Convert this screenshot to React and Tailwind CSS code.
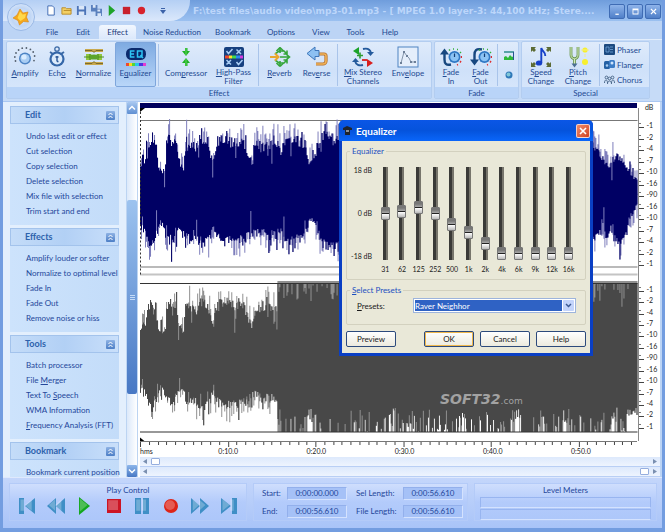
import React from "react";

/* ---------- waveform data ---------- */

// [x, amplitude] control points, in pixels of a 496 wide channel
const UP = [
  [0, 32], [5, 38], [7, 58], [16, 58], [18, 30], [22, 26], [25, 30], [26, 60], [36, 57], [38, 38], [43, 28],
  [45, 60], [52, 53], [57, 52], [60, 63], [67, 57], [70, 44], [73, 38], [76, 58], [82, 60], [95, 56], [100, 62],
  [103, 56], [108, 42], [112, 34], [115, 57], [122, 53], [128, 55], [135, 60], [140, 46], [143, 61], [155, 59],
  [165, 55], [168, 34], [173, 40], [177, 55], [182, 63], [198, 60], [454, 52], [462, 36], [467, 30], [470, 36],
  [475, 43], [481, 36], [485, 30], [490, 20], [496, 16],
];
const DOWN = [
  [0, 36], [5, 42], [8, 56], [13, 56], [17, 42], [20, 32], [23, 38], [27, 50], [33, 52], [38, 38], [43, 40],
  [47, 50], [55, 50], [62, 54], [68, 52], [73, 38], [78, 50], [83, 54], [95, 50], [102, 52], [110, 44], [117, 42],
  [128, 46], [140, 43], [145, 50], [155, 52], [163, 46], [167, 28], [172, 28], [177, 46], [182, 56], [198, 59],
  [454, 48], [460, 44], [465, 46], [470, 34], [475, 52], [481, 49], [487, 28], [496, 10],
];

function seeded(seed) {
  let s = seed;
  return () => {
    s = (s * 1664525 + 1013904223) % 4294967296;
    return s / 4294967296;
  };
}

function at(points, x) {
  for (let i = 1; i < points.length; i++) {
    if (x <= points[i][0]) {
      const [x0, y0] = points[i - 1];
      const [x1, y1] = points[i];
      return y0 + ((y1 - y0) * (x - x0)) / (x1 - x0);
    }
  }
  return points[points.length - 1][1];
}

const CLUSTERS = [137, 169, 251, 268, 321, 374, 400, 424, 472];

function build(seed, center, loud) {
  const rnd = seeded(seed);
  let solid = "";
  let faint = "";
  for (let x = 0; x < 496; x++) {
    let up = at(UP, x) * (0.8 + rnd() * 0.2);
    let down = at(DOWN, x) * (0.78 + rnd() * 0.22);
    let upF = up + (rnd() < 0.4 ? 3 + rnd() * 14 : 0);
    let downF = down + (rnd() < 0.4 ? 3 + rnd() * 12 : 0);
    if (rnd() < 0.06) up = upF = up + 6 + rnd() * 10;
    if (rnd() < 0.06) down = downF = down + 6 + rnd() * 12;
    if (rnd() < 0.09) up -= rnd() * 24;
    if (rnd() < 0.09) down -= rnd() * 24;
    if (loud && x > 136) {
      up = 74 - (rnd() < 0.4 ? rnd() * (x > 450 ? 26 : 18) : 0);
      upF = 76;
      const near = CLUSTERS.some((c) => Math.abs(c - x) < 4);
      const r = rnd();
      down = 74.5;
      downF = 74.5;
      if (x > 484) down = downF = 50 + r * 10;
      else if (near) down = 50 + r * 20;
      else if (r < 0.18) down = downF = 56 + rnd() * 18;
      else if (r < 0.36) down = 52 + rnd() * 20;
      if (near && rnd() < 0.5) downF = down;
    }
    solid += `M${x} ${(center - up).toFixed(1)}h1V${(center + down).toFixed(1)}h-1z`;
    faint += `M${x} ${(center - upF).toFixed(1)}h1V${(center + downF).toFixed(1)}h-1z`;
  }
  return { solid, faint };
}

const LEFT = build(11, 86, false);
const RIGHT = build(29, 80, true);

/* ---------- small helpers ---------- */

function Key({ text, k }) {
  if (k === undefined || k < 0) return text;
  return (
    <>
      {text.slice(0, k)}
      <u>{text[k]}</u>
      {text.slice(k + 1)}
    </>
  );
}

function Svg({ size = "size-[22px]", box = "0 0 22 22", children }) {
  return (
    <svg className={`${size} shrink-0`} viewBox={box} fill="none" aria-hidden="true">
      {children}
    </svg>
  );
}

/* ---------- ribbon icons ---------- */

const AmplifyIcon = () => (
  <Svg>
    <circle cx="11" cy="12.500" r="6" fill="#4c83c4" />
    <circle cx="11" cy="12.500" r="4.600" fill="#a9cdf3" />
    <circle cx="10" cy="11" r="2.600" fill="#d9ecff" />
    <g fill="#54606e">
      {[[1.5, 15], [0.8, 11], [2, 7], [4.6, 4], [8.2, 2.2], [12.4, 2], [16.4, 3.4], [19.2, 6], [20.6, 10], [20, 14.6]].map(([x, y]) => (
        <circle key={x} cx={x} cy={y} r="0.9" />
      ))}
    </g>
  </Svg>
);
const EchoIcon = () => (
  <Svg>
    <circle cx="11" cy="3" r="2.200" stroke="#3c6aa6" strokeWidth="1.300" />
    <path d="M4 6l3 2M18 6l-3 2" stroke="#3c6aa6" strokeWidth="2" />
    <circle cx="11" cy="13" r="7.600" fill="#3567a8" />
    <circle cx="11" cy="13" r="5.400" fill="#dcebfb" />
    <path d="M11 10v5.500M9.500 11h3M11 15.500h1.500" stroke="#2a5796" strokeWidth="1.400" />
  </Svg>
);
const NormalizeIcon = () => (
  <Svg>
    <path d="M2 3h18v3H2zM2 16h18v3H2z" fill="#c9a94e" />
    <path d="M2 4.500h7l2 2 2-2h7M2 17.500h7l2-2 2 2h7" stroke="#7d6c2c" strokeWidth="1" />
    <path d="M3 8h4l4 1.500L15 8h4v6h-4l-4-1.500L7 14H3z" fill="#8ec63f" />
    <path d="M1 11h20M7 8v6M15 8v6" stroke="#4c8f22" strokeWidth="1.200" />
    <ellipse cx="11" cy="11" rx="4" ry="2.600" fill="#5ba52c" />
  </Svg>
);
const EqualizerIcon = () => (
  <Svg>
    <rect x="1" y="2" width="20" height="12" rx="5.500" fill="#0b2a6c" />
    <path d="M9.500 5H5.500v6h4M5.500 8h3.500" stroke="#2ec4f4" strokeWidth="1.500" />
    <path d="M12.500 5h4.500v6h-4.500zM15.500 9l2.500 3" stroke="#2ec4f4" strokeWidth="1.500" />
    <path d="M1 17h3v3H1z" fill="#f04a2c" />
    <path d="M4 17h3v3H4z" fill="#ffd91c" />
    <path d="M7 17h3v3H7z" fill="#53d636" />
    <path d="M10 17h4v3h-4z" fill="#27c8e8" />
    <path d="M14 17h4v3h-4z" fill="#4b35e0" />
    <path d="M18 17h3v3h-3z" fill="#e63bd0" />
  </Svg>
);
const CompressorIcon = () => (
  <Svg>
    <path d="M10 2h2.500v3H15l-4 5-4-5h3zM10 20h2.500v-3H15l-4-5-4 5h3z" fill="#1fb225" />
    <path d="M11 2v7M11 20v-7" stroke="#6fe06a" strokeWidth="0.800" />
  </Svg>
);
const HighPassIcon = () => (
  <Svg>
    <rect x="1" y="1" width="20" height="20" rx="2" fill="#17407f" />
    <path d="M3.500 5l2 2.500L9.500 3M13.500 3.500l4.500 4.500M18 3.500L13.500 8M3.500 14l4.500 4.500M8 14l-4.500 4.500M13.500 16l2 2.500 4-4.500" stroke="#a9cdf5" strokeWidth="1.500" />
    <path d="M2 9.500h4v3H2z" fill="#f2482a" />
    <path d="M6 9.500h3v3H6z" fill="#ffe02a" />
    <path d="M9 9.500h4v3H9z" fill="#40da4a" />
    <path d="M13 9.500h4v3h-4z" fill="#2b8cf0" />
    <path d="M17 9.500h3v3h-3z" fill="#d43be0" />
  </Svg>
);
const ReverbIcon = () => (
  <Svg>
    <path d="M11 1.500l-3.500 3.500M11 1.500l3.500 3.500M11 20.500L7.500 17M11 20.500l3.500-3.500M11 2v5M11 20v-5" stroke="#35a53a" strokeWidth="1.600" />
    <path d="M6 8l4-3h5l3 3M6 14l4 3h5l3-3M18 4.500V8h-3.500M18 17.500V14h-3.500M11 11h9M17.500 8.500L20.500 11l-3 2.500" stroke="#35a53a" strokeWidth="1.600" />
    <path d="M1 11h8M6 7.500L9.500 11 6 14.500" stroke="#e8a72e" strokeWidth="2" />
  </Svg>
);
const ReverseIcon = () => (
  <Svg>
    <path d="M11 8h7a2 2 0 012 2v5a3 3 0 01-3 3h-7" stroke="#b8702a" strokeWidth="3.200" />
    <path d="M11 8h7a2 2 0 012 2v5a3 3 0 01-3 3h-7" stroke="#f0b35a" strokeWidth="1.600" />
    <path d="M9 1L1 7.500 9 14v-3.500h4v-6H9z" fill="#8cc0f2" stroke="#3c76ba" strokeWidth="1" />
  </Svg>
);
const MixIcon = () => (
  <Svg>
    <path d="M1 5l6-4v8z" fill="#1ca32a" />
    <path d="M21 17l-6-4v8z" fill="#d81f1f" />
    <path d="M11 3c4-1 7 0 8 4M11 19c-4 1-7 0-8-4" stroke="#245a9c" strokeWidth="1.900" />
    <path d="M15 6h7l-3.500 4zM0 16h7l-3.500-4z" fill="#245a9c" />
    <path d="M5 9.500h6M8 6.500v6" stroke="#2c9c30" strokeWidth="1.600" />
    <path d="M10 14h5" stroke="#d81f1f" strokeWidth="1.800" />
  </Svg>
);
const EnvelopeIcon = () => (
  <Svg>
    <rect x="1" y="1" width="20" height="20" fill="#e4eefb" stroke="#4f83c2" />
    <path d="M4 17l3-11 3 4 2 2 2 4h4" stroke="#8394aa" strokeWidth="1" />
    <path d="M3 16h2v2H3zM6 5h2v2H6zM9 9h2v2H9zM13 15h2v2h-2zM17 15h2v2h-2z" fill="#6c7f98" />
  </Svg>
);
function FadeIcon({ out }) {
  return (
    <Svg>
      {out ? (
        <>
          <path d="M12 3.500C6 2 4.500 5 4.500 9v5" stroke="#17477f" strokeWidth="2.400" />
          <path d="M0 13.500h9l-4.500 6z" fill="#17477f" />
        </>
      ) : (
        <>
          <path d="M11 18.500c-5 1-6.500-1-6.500-5V8" stroke="#17477f" strokeWidth="2.400" />
          <path d="M0 8.500h9l-4.500-6z" fill="#17477f" />
        </>
      )}
      <circle cx="14.500" cy="11" r="6" fill="#2f78c4" />
      <circle cx="14.500" cy="11" r="4.300" fill="#8cc3f4" />
      <path d="M14.500 7.500V11" stroke="#123c74" strokeWidth="1.200" />
      <path d="M9 4.500l1-1M13 3h1M17 3.500h1M20 6l1 1" stroke="#35b03a" strokeWidth="1.400" />
      <path d="M21.500 10v2M21 15l-1 1.500M18 18.500l-1 .5" stroke="#e03030" strokeWidth="1.400" />
    </Svg>
  );
}
const SpeedIcon = () => (
  <Svg>
    <path d="M1 1h5L4.500 2.500 6 4 4 6 2.500 4.500 1 6zM21 1h-5l1.500 1.500L16 4l2 2 1.500-1.500L21 6zM1 21h5l-1.500-1.500L6 18l-2-2-1.500 1.500L1 16zM21 21h-5l1.500-1.500L16 18l2-2 1.500 1.500L21 16z" fill="#5c6b34" />
    <ellipse cx="9" cy="17" rx="3.200" ry="2.600" fill="#1540c8" />
    <path d="M11.300 17V2c1 4 4.500 4 4 8" stroke="#1540c8" strokeWidth="1.900" />
  </Svg>
);
const PitchIcon = () => (
  <Svg>
    <path d="M4 1v8c0 5 7 5 7 0V1M7.500 13v6" stroke="#6d9a52" strokeWidth="2.800" />
    <path d="M4 1v8c0 5 7 5 7 0V1M7.500 13v6" stroke="#d6eac0" strokeWidth="1" />
    <path d="M4.500 17.500h6l-3 4z" fill="#4a6e93" />
    <circle cx="18" cy="4" r="2.600" fill="#f7ef2e" />
    <circle cx="18" cy="16" r="3" fill="#f7ef2e" />
    <path d="M14 4h8M18 8v3" stroke="#f4ee86" strokeWidth="1" />
  </Svg>
);
const PhaserIcon = () => (
  <Svg size="size-[11px]" box="0 0 11 11">
    <rect width="11" height="11" rx="1" fill="#1c4a80" />
    <path d="M2 3h3v5H2zM6 3h3M6 5.500h3M6 8h3" stroke="#7eb2e6" strokeWidth="0.700" />
  </Svg>
);
const FlangerIcon = () => (
  <Svg size="size-[11px]" box="0 0 11 11">
    <rect y="2" width="6" height="8" rx="1.500" fill="#2460a4" />
    <rect x="5" y="1" width="6" height="8" rx="1.500" fill="#3b7cc6" />
    <circle cx="8" cy="4" r="1.500" fill="#cfe4fb" />
    <circle cx="3" cy="6.500" r="1.300" fill="#a9cdf3" />
  </Svg>
);
const ChorusIcon = () => (
  <Svg size="size-[11px]" box="0 0 11 11">
    <g stroke="#4d6a8c" strokeWidth="1">
      <circle cx="2.500" cy="3.500" r="1.400" />
      <circle cx="8.500" cy="3.500" r="1.400" />
      <circle cx="5.500" cy="4.500" r="1.400" />
      <path d="M.5 9c0-4 3-4 3 0M7.500 9c0-4 3-4 3 0M3.500 10c0-4 4-4 4 0" />
    </g>
  </Svg>
);

/* ---------- title bar ---------- */

const QUICK = [
  ["New", <path key="n" d="M2 1h5l2 2v8H2z" fill="#fff" stroke="#3a66b0" />],
  ["Open", <path key="o" d="M1 3h4l1 1h5v6H1zM3 6h8" fill="#f3cf63" stroke="#b98b27" />],
  ["Save", <g key="s"><path d="M1 1h9l1 1v9H1z" fill="#4c74b8" /><path d="M3 1h6v4H3zM3 7h6v4H3z" fill="#dbe7f8" /></g>],
  ["Save all", <g key="a"><path d="M0 0h7v7H0zM5 4h7v8H5z" fill="#5a80bd" /><path d="M2 0h3v3H2zM7 5h3v2H7zM7 9h4v3H7z" fill="#dbe7f8" /></g>],
  ["Play", <path key="p" d="M3 0l7 6-7 6z" fill="#1fa32a" />],
  ["Stop", <path key="t" d="M2 2h8v8H2z" fill="#c8202c" />],
  ["Record", <circle key="r" cx="6" cy="6" r="4" fill="#d8232c" />],
];

function TitleBar() {
  return (
    <header className="relative flex h-[21px] shrink-0 items-center bg-linear-to-b from-[#6f9ddc] via-[#86b0e8] to-[#9bc0f0] pr-px">
      <div className="flex h-full w-[187px] shrink-0 items-center rounded-br-[20px] bg-linear-to-b from-[#b4cff4] to-[#dbe8fb] pl-[41px]">
        {QUICK.map(([name, icon]) => (
          <button key={name} type="button" aria-label={name} className="flex w-[15px] justify-center">
            <svg className="size-[11px]" viewBox="0 0 12 12" fill="none" aria-hidden="true">{icon}</svg>
          </button>
        ))}
        <button type="button" aria-label="Customize" className="ml-2 flex w-3 justify-center">
          <svg className="size-[6px]" viewBox="0 0 6 6" aria-hidden="true"><path d="M1 0h4v1H1zM0 2h6L3 6z" fill="#3c62a8" /></svg>
        </button>
      </div>
      <h1 className="min-w-0 flex-1 truncate pl-[3px] font-['DejaVu_Sans',sans-serif] text-[9px] font-bold leading-[20px] text-[#bcd6fa]">
        F:\test files\audio video\mp3-01.mp3 - [ MPEG 1.0 layer-3: 44,100 kHz; Stere....
      </h1>
      <div className="flex gap-[2px] pt-[2px]">
        {[["Minimize", "M4 9h4v1.500H4z"], ["Maximize", "M3 3h7v7H3zM4 5v4h5V5z"], ["Close", "M3 4l1-1 2.500 2.500L9 3l1 1-2.500 2.500L10 9l-1 1-2.500-2.500L4 10 3 9l2.500-2.500z"]].map(([n, d]) => (
          <button key={n} type="button" aria-label={n} className="flex h-[15px] w-4 items-center justify-center rounded-[2px] border border-[#3f6cb4] bg-linear-to-b from-[#8fb4ea] to-[#4f7fc8]">
            <svg className="size-[11px]" viewBox="0 0 13 13" aria-hidden="true"><path d={d} fill="#fff" fillRule="evenodd" /></svg>
          </button>
        ))}
      </div>
      <button type="button" aria-label="Application menu" className="absolute left-[4px] top-[3px] flex size-[28px] items-center justify-center rounded-full border border-[#9ab9e6] bg-radial from-[#dce9fb] via-[#c0d6f5] to-[#e9f2fd]">
        <svg className="size-[18px]" viewBox="0 0 18 18" aria-hidden="true">
          <path d="M8 1l3 4 5-1-1.500 5 2 5-5-.5L7.500 17 6 12.500 1 10l4-3z" fill="#f5a81c" stroke="#d98512" strokeWidth=".6" />
          <path d="M8 3.500l2.500 3L14 6l-1 4-4.500 3-3-3z" fill="#ffd84a" />
        </svg>
      </button>
    </header>
  );
}

/* ---------- menu tabs ---------- */

const TABS = [
  ["File", "w-[30px]"], ["Edit", "w-[32px]"], ["Effect", "w-[37px]"], ["Noise Reduction", "w-[72px]"],
  ["Bookmark", "w-[50px]"], ["Options", "w-[46px]"], ["View", "w-[34px]"], ["Tools", "w-[35px]"], ["Help", "w-[34px]"],
];

function Tabs() {
  return (
    <nav className="flex h-[18px] shrink-0 items-end bg-[#bcd4f5] pl-[34px] text-[#234a92]">
      {TABS.map(([t, w]) => (
        <button
          key={t}
          type="button"
          className={`${w} h-[14px] shrink-0 whitespace-nowrap text-center ${t === "Effect" ? "rounded-t-[3px] bg-linear-to-b from-[#f2f7fe] to-[#dbe8fb] text-[#1b3a7a]" : ""}`}
        >
          {t}
        </button>
      ))}
    </nav>
  );
}

/* ---------- ribbon ---------- */

function Tool({ icon, lines, k, w, active }) {
  return (
    <button
      type="button"
      className={`${w} flex h-[45px] shrink-0 flex-col items-center rounded-[2px] border pt-[3px] leading-[9px] ${
        active ? "border-[#7ea6dc] bg-linear-to-b from-[#7fabe2] to-[#b9d6f8]" : "border-transparent"
      }`}
    >
      {icon}
      <span className="block h-px" />
      {lines.map((l, i) => (
        <span key={l} className="block whitespace-nowrap">
          <Key text={l} k={i === 0 ? k : -1} />
        </span>
      ))}
    </button>
  );
}

const Sep = () => <span className="mx-[2px] h-[42px] w-px shrink-0 bg-[#a9c4ea]" />;

function Group({ title, children }) {
  return (
    <section className="flex flex-col rounded-[2px] border border-[#b3cdf0] bg-linear-to-b from-[#dfebfb] via-[#cfe1f9] to-[#d9e8fc]">
      <div className="flex flex-1 items-center px-px">{children}</div>
      <h2 className="h-[11px] bg-[#b9d4f8] text-center leading-[12px]">{title}</h2>
    </section>
  );
}

function Ribbon() {
  return (
    <div className="flex h-[62px] shrink-0 gap-[2px] border-t border-[#e3eefc] bg-[#c6dbf7] pb-[2px] pl-[3px] pt-px text-[#234a92]">
      <Group title="Effect">
        <Tool icon={<AmplifyIcon />} lines={["Amplify"]} k={0} w="w-[34px]" />
        <Tool icon={<EchoIcon />} lines={["Echo"]} k={3} w="w-[30px]" />
        <Tool icon={<NormalizeIcon />} lines={["Normalize"]} k={0} w="w-[43px]" />
        <Tool icon={<EqualizerIcon />} lines={["Equalizer"]} k={1} w="w-[41px]" active />
        <Sep />
        <Tool icon={<CompressorIcon />} lines={["Compressor"]} k={3} w="w-[50px]" />
        <Tool icon={<HighPassIcon />} lines={["High-Pass", "Filter"]} k={0} w="w-[45px]" />
        <Sep />
        <Tool icon={<ReverbIcon />} lines={["Reverb"]} k={0} w="w-[37px]" />
        <Tool icon={<ReverseIcon />} lines={["Reverse"]} k={3} w="w-[37px]" />
        <Sep />
        <Tool icon={<MixIcon />} lines={["Mix Stereo", "Channels"]} k={0} w="w-[46px]" />
        <Tool icon={<EnvelopeIcon />} lines={["Envelope"]} k={3} w="w-[44px]" />
      </Group>
      <Group title="Fade">
        <Tool icon={<FadeIcon />} lines={["Fade", "In"]} k={0} w="w-[30px]" />
        <Tool icon={<FadeIcon out />} lines={["Fade", "Out"]} k={0} w="w-[29px]" />
        <Sep />
        <div className="flex w-[17px] flex-col items-center gap-[10px]">
          <button type="button" aria-label="Fade curve">
            <Svg size="size-[10px]" box="0 0 10 10"><path d="M0 1h10" stroke="#2e8c8c" strokeWidth="1.500" /><path d="M0 9V6l2-1 2 2 2-3 2 2 2-1v4z" fill="#2eb83a" /><path d="M9.500 1v8" stroke="#26548e" /></Svg>
          </button>
          <button type="button" aria-label="Fade level">
            <Svg size="size-[8px]" box="0 0 8 8"><circle cx="4" cy="4" r="3.500" fill="#2f78b8" /><circle cx="3.500" cy="3.500" r="2" fill="#7fc6d8" /></Svg>
          </button>
        </div>
      </Group>
      <Group title="Special">
        <Tool icon={<SpeedIcon />} lines={["Speed", "Change"]} k={1} w="w-[36px]" />
        <Tool icon={<PitchIcon />} lines={["Pitch", "Change"]} k={0} w="w-[38px]" />
        <Sep />
        <div className="flex flex-col gap-[4px] pl-[2px] pr-[5px]">
          {[["Phaser", <PhaserIcon key="p" />], ["Flanger", <FlangerIcon key="f" />], ["Chorus", <ChorusIcon key="c" />]].map(([t, icon]) => (
            <button key={t} type="button" className="flex h-[11px] items-center gap-[2px]">
              {icon}
              {t}
            </button>
          ))}
        </div>
      </Group>
    </div>
  );
}

/* ---------- task side bar ---------- */

const SECTIONS = [
  ["Edit", [["Undo last edit or effect"], ["Cut selection"], ["Copy selection"], ["Delete selection"], ["Mix file with selection"], ["Trim start and end"]]],
  ["Effects", [["Amplify louder or softer"], ["Normalize to optimal level"], ["Fade In"], ["Fade Out"], ["Remove noise or hiss"]]],
  ["Tools", [["Batch processor"], ["File Merger", 5], ["Text To Speech", 8], ["WMA Information"], ["Frequency Analysis (FFT)", 0]]],
  ["Bookmark", [["Bookmark current position"]]],
];

function Sidebar() {
  return (
    <aside className="flex min-h-0 w-[135px] shrink-0 bg-[#e3effd]">
      <div className="flex min-w-0 flex-1 flex-col gap-[3px] overflow-hidden px-[7px] pt-[4px]">
        {SECTIONS.map(([title, items]) => (
          <section key={title} className="shrink-0 bg-linear-to-r from-[#cde3fc] to-[#c3dcf9]">
            <h2 className="flex h-[18px] items-center justify-between border border-[#a3c3ec] bg-linear-to-r from-[#c4dcf8] via-[#b2d0f5] to-[#c9dffa] pl-[14px] pr-[3px] text-[9px] font-bold text-[#2d62ac]">
              {title}
              <button type="button" aria-label={`Collapse ${title}`} className="flex size-[9px] items-center justify-center rounded-[1px] bg-linear-to-b from-[#8eb2e4] to-[#4d7fc6]">
                <svg className="size-[7px]" viewBox="0 0 7 7" fill="none" stroke="#fff" aria-hidden="true"><path d="M1.500 3l2-2 2 2M1.500 6l2-2 2 2" /></svg>
              </button>
            </h2>
            <ul className="flex flex-col gap-[5px] pb-[9px] pl-[16px] pt-[7px] leading-[10px] text-[#24479a]">
              {items.map(([t, k]) => (
                <li key={t}>
                  <a href="#" className="block whitespace-nowrap"><Key text={t} k={k} /></a>
                </li>
              ))}
            </ul>
          </section>
        ))}
      </div>
      <div className="flex w-[12px] shrink-0 flex-col border-x border-[#bcd4f2] bg-linear-to-r from-[#dce9fa] to-white">
        <button type="button" aria-label="Scroll up" className="flex h-[12px] items-center justify-center rounded-[1px] bg-linear-to-b from-[#a9c8f0] to-[#5f8fd2]">
          <svg className="size-[8px]" viewBox="0 0 8 8" fill="none" stroke="#fff" strokeWidth="1.500" aria-hidden="true"><path d="M1 5.500l3-3 3 3" /></svg>
        </button>
        <div className="flex-[86]" />
        <div className="flex flex-[194] flex-col items-center justify-center gap-px rounded-[2px] bg-linear-to-b from-[#9dc3ef] to-[#4878c4]">
          <span className="h-px w-[5px] bg-[#c4dbf7]" />
          <span className="h-px w-[5px] bg-[#c4dbf7]" />
          <span className="h-px w-[5px] bg-[#c4dbf7]" />
        </div>
        <div className="flex-[71]" />
        <button type="button" aria-label="Scroll down" className="flex h-[12px] items-center justify-center rounded-[1px] bg-linear-to-b from-[#8db6ea] to-[#4878c4]">
          <svg className="size-[8px]" viewBox="0 0 8 8" fill="none" stroke="#fff" strokeWidth="1.500" aria-hidden="true"><path d="M1 2.500l3 3 3-3" /></svg>
        </button>
      </div>
    </aside>
  );
}

/* ---------- editor ---------- */

const DB = ["-1", "-2", "-4", "-7", "-10", "-16", "-90", "-16", "-10", "-7", "-4", "-2", "-1"];

function Scale({ pad }) {
  return (
    <div className={`${pad} flex w-[23px] shrink-0 flex-col border-l border-[#8a8a8a] text-[7px] text-[#222]`}>
      {DB.map((d, i) => (
        <div key={i} className="flex min-h-0 flex-1 items-center justify-between pr-[3px] leading-none">
          <span className="flex w-[5px] flex-col gap-[5px]">
            <span className="h-px w-[2px] bg-[#777]" />
            <span className="-mt-[2px] h-px w-[5px] bg-[#444]" />
          </span>
          <span className="w-[11px] text-left">{d}</span>
        </div>
      ))}
    </div>
  );
}

const TIMES = ["0:10.0", "0:20.0", "0:30.0", "0:40.0", "0:50.0"];

function Editor() {
  return (
    <main className="flex min-w-0 flex-1 flex-col border-l-2 border-t border-white bg-white">
      <div className="flex h-[5px] shrink-0">
        <div className="flex-1 bg-[#00005c]" />
        <div className="w-[23px] pl-[8px] text-[7px] leading-[8px] text-[#222]">dB</div>
      </div>
      <div className="grid min-h-0 flex-1 grid-rows-[168fr_164fr]">
        <div className="flex min-h-0">
          <svg className="h-full min-w-0 flex-1" viewBox="0 0 496 168" preserveAspectRatio="none" role="img" aria-label="Left channel">
            <path d="M0 12.500h496M0 158.500h496" stroke="#777" />
            <path d="M0 166h496" stroke="#c4c4c4" strokeWidth="2" />
            <path d="M0 86h496" stroke="#000060" />
            <path d={LEFT.faint} fill="#7f7fbc" />
            <path d={LEFT.solid} fill="#000064" />
            <path d="M.5 0v167" stroke="#333" strokeDasharray="2 2" />
            <path d="M0 0h5l-5 4z" fill="#000" />
          </svg>
          <Scale pad="pb-[7px] pt-[12px]" />
        </div>
        <div className="relative flex min-h-0">
          <svg className="h-full min-w-0 flex-1" viewBox="0 0 496 164" preserveAspectRatio="none" role="img" aria-label="Right channel">
            <path d={RIGHT.faint} fill="#909090" />
            <path d={RIGHT.solid} fill="#484848" />
            <path d="M0 6.500h496M0 154.500h496" stroke="#333" />
            <path d="M0 160l5 4H0z" fill="#000" />
          </svg>
          <Scale pad="pb-[9px] pt-[7px]" />
          <p className="absolute bottom-[35px] left-[300px] font-['DejaVu_Sans',sans-serif] text-[14px] font-bold italic leading-none text-[#a2a2a2]">
            SOFT32<span className="text-[9px] font-normal not-italic">.com</span>
          </p>
        </div>
      </div>
      <div className="flex h-[16px] shrink-0 flex-col pr-[23px] text-[7px] text-[#222]">
        <svg className="h-[6px] w-full" viewBox="0 0 496 6" preserveAspectRatio="none" aria-hidden="true">
          <path d="M0 .5h496" stroke="#777" />
          {Array.from({ length: 57 }, (_, i) => (
            <path key={i} d={`M${Math.round(i * 8.75) + 0.5} 1v${i % 10 === 0 ? 5 : 3}`} stroke="#444" />
          ))}
        </svg>
        <div className="grid grid-cols-[44fr_88fr_88fr_88fr_88fr_88fr_12fr] leading-[9px]">
          <span>hms</span>
          {TIMES.map((t) => (
            <span key={t} className="text-center">{t}</span>
          ))}
        </div>
      </div>
      {["justify-start", "justify-end"].map((side) => (
        <div key={side} className={`${side} flex h-[10px] shrink-0 items-center gap-[4px] border-b border-[#b9cff5] bg-linear-to-b from-[#dde9fc] to-[#eef4fe] px-[3px]`}>
          <svg className="h-[5px] w-[4px]" viewBox="0 0 4 5" aria-hidden="true"><path d="M4 0v5L0 2.500z" fill="#7a8fb0" /></svg>
          {side === "justify-start" && <span className="h-[7px] w-[9px] rounded-[1px] border border-[#96aede] bg-white" />}
          <span className="flex-1" />
          {side === "justify-end" && <span className="h-[7px] w-[9px] rounded-[1px] border border-[#96aede] bg-white" />}
          <svg className="h-[5px] w-[4px]" viewBox="0 0 4 5" aria-hidden="true"><path d="M0 0v5l4-2.500z" fill="#7a8fb0" /></svg>
        </div>
      ))}
    </main>
  );
}

/* ---------- bottom panel ---------- */

const TRANSPORT = [
  ["To start", "#3f8fc6", "M1 1h5v16H1zM17 1v16L7 9z"],
  ["Rewind", "#3f8fc6", "M9 1v16L0 9zM18 1v16L9 9z"],
  ["Play", "#12a71e", "M3 0l11 9L3 18z"],
  ["Stop", "#cc1424", "M2 2h14v14H2z"],
  ["Pause", "#3f8fc6", "M2 1h6v16H2zM10 1h6v16h-6z"],
  ["Record", "#dd2418", "M9 2a7 7 0 100 14A7 7 0 109 2z"],
  ["Forward", "#3f8fc6", "M0 1v16l9-8zM9 1v16l9-8z"],
  ["To end", "#3f8fc6", "M1 1v16l10-8zM12 1h5v16h-5z"],
];

const PANEL = "border border-[#b4cbf8] bg-linear-to-b from-[#cfdefd] via-[#b3cbfb] to-[#adc7fa]";

function Field({ id, label, value, w }) {
  return (
    <div className="flex items-center">
      <label htmlFor={id} className={w}>{label}</label>
      <input
        id={id}
        readOnly
        value={value}
        className="h-[13px] w-[60px] border border-[#93b0ec] border-b-[#d4e2fe] border-r-[#d4e2fe] bg-[#a5c1f7] text-center text-[#24479a] outline-none"
      />
    </div>
  );
}

function BottomPanel() {
  return (
    <footer className="flex h-[51px] shrink-0 gap-[6px] border-t border-[#dfe9fd] bg-linear-to-b from-[#c4d6fb] to-[#a9c4f8] pb-[7px] pl-[6px] pr-[5px] pt-[5px] text-[#24479a]">
      <section className={`${PANEL} flex w-[238px] shrink-0 flex-col`}>
        <h2 className="h-[12px] text-center leading-[12px]">Play Control</h2>
        <div className="flex justify-between px-[8px] pt-px">
          {TRANSPORT.map(([n, c, d]) => (
            <button key={n} type="button" aria-label={n}>
              <svg className="size-[18px]" viewBox="0 0 18 18" aria-hidden="true">
                <path d={d} fill={c} />
                <path d={d} fill="#fff" fillOpacity="0.250" transform="translate(1.800 1.800) scale(.7)" />
              </svg>
            </button>
          ))}
        </div>
      </section>
      <section className={`${PANEL} grid shrink-0 grid-cols-[auto_auto] content-around gap-x-[9px] pl-[8px] pr-[4px]`}>
        <Field id="start" label="Start:" value="0:00:00.000" w="w-[25px]" />
        <Field id="sel" label="Sel Length:" value="0:00:56.610" w="w-[47px]" />
        <Field id="end" label="End:" value="0:00:56.610" w="w-[25px]" />
        <Field id="len" label="File Length:" value="0:00:56.610" w="w-[47px]" />
      </section>
      <section className={`${PANEL} flex min-w-0 flex-1 flex-col px-[5px]`}>
        <h2 className="h-[12px] text-center leading-[12px]">Level Meters</h2>
        <div className="mt-px h-[11px] border border-[#98b5f0] border-b-[#d4e2fe]" />
        <div className="mt-px h-[11px] border border-[#98b5f0] border-b-[#d4e2fe]" />
      </section>
    </footer>
  );
}

/* ---------- equalizer dialog ---------- */

const BANDS = [
  ["31", 0], ["62", 1.1], ["125", 2.6], ["252", 0], ["500", -4.8], ["1k", -8.7],
  ["2k", -13.7], ["4k", -18], ["6k", -18], ["9k", -18], ["12k", -18], ["16k", -18],
];

function Dialog() {
  return (
    <div role="dialog" aria-labelledby="dlg-title" className="absolute left-[336px] top-[120px] flex w-[254px] flex-col rounded-t-[5px] bg-[#0a3fc4] text-[#1a1a1a]">
      <div className="flex h-[21px] items-center gap-[4px] rounded-t-[5px] bg-linear-to-b from-[#0b56e6] via-[#0553dc] to-[#0a66fa] pl-[4px] pr-[3px]">
        <svg className="size-[9px]" viewBox="0 0 9 9" aria-hidden="true"><path d="M0 2l4-2 5 2v2H7v5H2V4H0z" fill="#20242c" /><path d="M3 4h3v2H3z" fill="#8a9098" /></svg>
        <h2 id="dlg-title" className="flex-1 text-[10px] font-bold text-white">Equalizer</h2>
        <button type="button" aria-label="Close" className="flex size-[14px] items-center justify-center rounded-[2px] border border-white/70 bg-linear-to-br from-[#ee8a6a] to-[#d0401c]">
          <svg className="size-[8px]" viewBox="0 0 8 8" stroke="#fff" strokeWidth="1.600" aria-hidden="true"><path d="M1 1l6 6M7 1L1 7" /></svg>
        </button>
      </div>
      <div className="m-[3px] mt-0 bg-[#e9e8d8] px-[4px] pb-[6px] pt-[5px]">
        <fieldset className="h-[134px] rounded-[2px] border border-[#d3d1bf] pl-[3px]">
          <legend className="px-[2px] leading-[10px] text-[#1c4fc0]">Equalizer</legend>
          <div className="flex pt-[11px]">
            <div className="flex h-[93px] w-[22px] flex-col justify-between text-right text-[7px] leading-[7px]">
              <span>18 dB</span>
              <span>0 dB</span>
              <span className="whitespace-nowrap">-18 dB</span>
            </div>
            <div className="ml-[5px] grid w-[200px] grid-cols-12">
              {BANDS.map(([f, v]) => (
                <div key={f} className="flex min-w-0 flex-col items-center">
                  <input
                    id={`band-${f}`}
                    type="range"
                    min="-18"
                    max="18"
                    step="0.1"
                    defaultValue={v}
                    className="h-[93px] w-[9px] appearance-none bg-[linear-gradient(to_right,transparent_0_2px,#3a3a38_2px_5px,#77756c_5px_7px,transparent_7px)] [direction:rtl] [writing-mode:vertical-lr] [&::-webkit-slider-thumb]:h-[13px] [&::-webkit-slider-thumb]:w-[9px] [&::-webkit-slider-thumb]:appearance-none [&::-webkit-slider-thumb]:rounded-[1px] [&::-webkit-slider-thumb]:border [&::-webkit-slider-thumb]:border-[#777] [&::-webkit-slider-thumb]:bg-[linear-gradient(to_bottom,#777_0_2px,#aaa_5px,#222_5px_6px,#fff_6px,#bbb)]"
                  />
                  <label htmlFor={`band-${f}`} className="pt-[5px] text-[7px] leading-[9px]">{f}</label>
                </div>
              ))}
            </div>
          </div>
        </fieldset>
        <fieldset className="mt-[5px] h-[40px] rounded-[2px] border border-[#d3d1bf] pl-[3px]">
          <legend className="px-[2px] leading-[10px] text-[#1c4fc0]"><Key text="Select Presets" k={0} /></legend>
          <div className="flex items-center pl-[7px] pr-[9px] pt-[3px]">
            <label htmlFor="preset" className="w-[56px]"><Key text="Presets:" k={0} /></label>
            <div className="relative flex h-[15px] flex-1 border border-[#9db4dc] bg-white p-px">
              <select id="preset" className="h-full flex-1 appearance-none bg-[#2f62c4] bg-clip-content pr-[12px] leading-[10px] text-white outline-none">
                <option>Raver Neighhor</option>
              </select>
              <span className="pointer-events-none absolute inset-y-px right-px flex w-[11px] items-center justify-center rounded-[1px] bg-[#c3d4fb]">
                <svg className="size-[7px]" viewBox="0 0 7 7" fill="none" stroke="#3c5a94" strokeWidth="1.500" aria-hidden="true"><path d="M1 2l2.500 2.500L6 2" /></svg>
              </span>
            </div>
          </div>
        </fieldset>
        <div className="flex gap-[6px] pt-[6px]">
          {["Preview", "OK", "Cancel", "Help"].map((b) => (
            <button
              key={b}
              type="button"
              className={`h-[16px] w-[50px] rounded-[2px] border bg-linear-to-b from-white to-[#eceade] ${b === "Preview" ? "mr-auto" : ""} ${b === "OK" ? "border-[#2c4a7c] ring-1 ring-inset ring-[#f0b84c]" : "border-[#2c4a7c]"}`}
            >
              {b}
            </button>
          ))}
        </div>
      </div>
    </div>
  );
}

export default function App() {
  return (
    <div className="relative flex h-screen w-full flex-col overflow-hidden border-x-[3px] border-b-[4px] border-[#739de0] bg-[#bcd4f5] font-['Lato',sans-serif] text-[8px] leading-[12px]">
      <TitleBar />
      <Tabs />
      <Ribbon />
      <div className="flex min-h-0 flex-1 border-t border-[#a9c7f2] pr-[2px]">
        <Sidebar />
        <Editor />
      </div>
      <BottomPanel />
      <Dialog />
    </div>
  );
}
